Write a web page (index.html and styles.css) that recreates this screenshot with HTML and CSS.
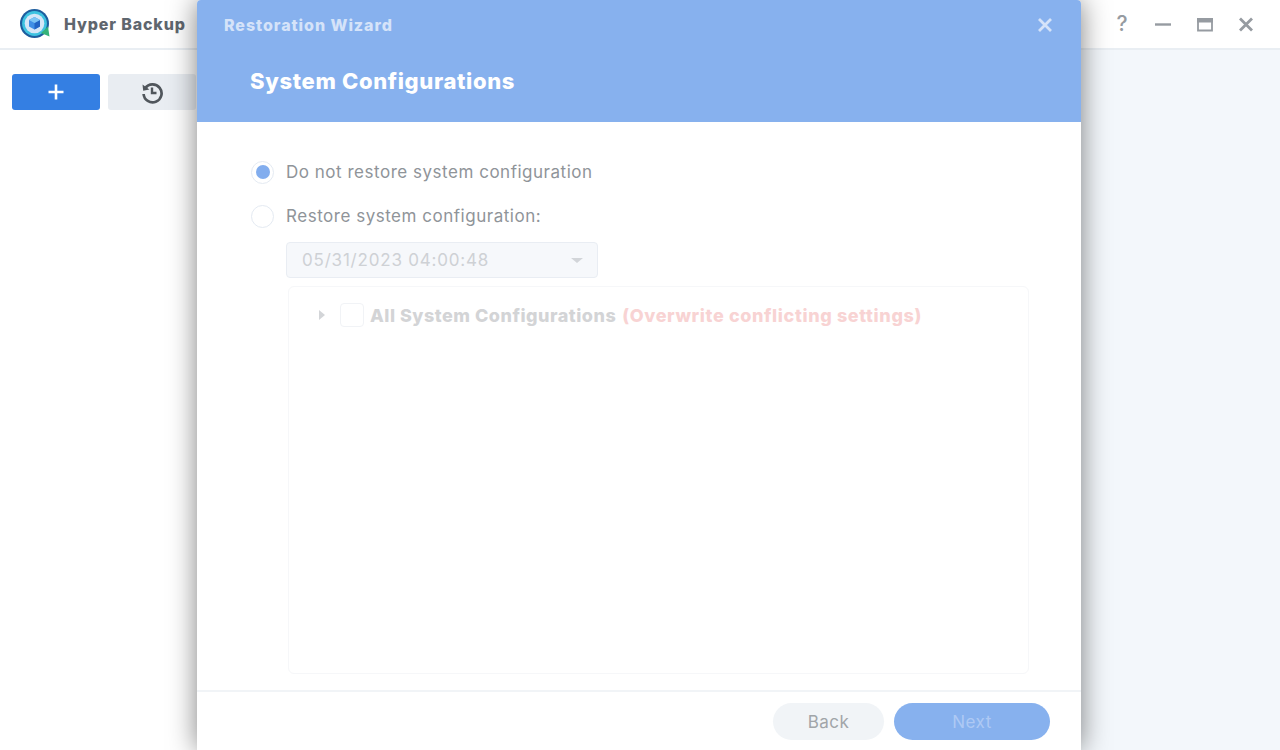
FILE: index.html
```html
<!DOCTYPE html>
<html lang="en">
<head>
<meta charset="utf-8">
<title>Hyper Backup</title>
<link rel="stylesheet" href="styles.css">
</head>
<body>
<div class="app">
  <header class="titlebar">
    <svg class="logo" viewBox="0 0 32 32" width="32" height="32">
      <circle cx="15.5" cy="15.5" r="14.5" fill="#1d5d9e"/>
      <circle cx="15.5" cy="15.5" r="12.400" fill="#3ec2e0"/>
      <circle cx="15.5" cy="15.5" r="9.800" fill="#d5e6f7"/>
      <path d="M15.5 9l5.500 3v6.400l-5.500 3-5.500-3V12z" fill="#3f8fe6"/>
      <path d="M15.5 15l5.500-3v6.400l-5.500 3z" fill="#2264c4"/>
      <path d="M15.5 9l5.500 3-5.500 3-5.500-3z" fill="#7cc4f4"/>
      <path d="M22 25l7-6.500 1.500 10z" fill="#35b27a"/>
    </svg>
    <span class="app-name">Hyper Backup</span>
    <div class="win-controls">
      <span class="help">?</span>
      <svg class="ctl" viewBox="0 0 18 18" width="18" height="18"><path d="M2 9.500h16" stroke="#969ba1" stroke-width="2.400" fill="none"/></svg>
      <svg class="ctl" viewBox="0 0 18 18" width="18" height="18"><path d="M3 4h14v11.500H3z" fill="none" stroke="#969ba1" stroke-width="1.800"/><path d="M2 3h16v4.500H2z" fill="#969ba1"/></svg>
      <svg class="ctl" viewBox="0 0 18 18" width="18" height="18"><path d="M3 3.500l12 12M15 3.500l-12 12" stroke="#969ba1" stroke-width="2.800" fill="none"/></svg>
    </div>
  </header>
  <div class="workspace">
    <aside class="sidebar">
      <button class="tool tool-add" type="button">
        <svg viewBox="0 0 18 18" width="18" height="18"><path d="M9 1.500v15M1.500 9h15" stroke="#fff" stroke-width="2.600" fill="none"/></svg>
      </button>
      <button class="tool tool-history" type="button">
        <svg viewBox="0 0 24 24" width="24" height="24"><path d="M5.200 8.200A9 9 0 1 1 3.600 14" fill="none" stroke="#50565c" stroke-width="2.700"/><path d="M2.500 4.500l.7 6.300 6.200-1.200z" fill="#50565c"/><path d="M12 7.500V13h4.500" fill="none" stroke="#50565c" stroke-width="2.400"/></svg>
      </button>
    </aside>
    <main class="content"></main>
  </div>
</div>

<section class="dialog">
  <div class="dialog-head">
    <div class="dialog-topline">
      <span class="dialog-app">Restoration Wizard</span>
      <svg viewBox="0 0 16 16" width="16" height="16"><path d="M2 2l12 12M14 2L2 14" stroke="#d5e3f9" stroke-width="2.800" fill="none"/></svg>
    </div>
    <h1 class="dialog-title">System Configurations</h1>
  </div>
  <div class="dialog-body">
    <label class="radio-row radio-first"><span class="radio radio-on"></span><span>Do not restore system configuration</span></label>
    <label class="radio-row radio-second"><span class="radio"></span><span>Restore system configuration:</span></label>
    <div class="nested">
      <div class="select"><span>05/31/2023 04:00:48</span><span class="caret"></span></div>
      <div class="tree">
        <div class="tree-row">
          <span class="tree-arrow"></span>
          <span class="check"></span>
          <span class="tree-label">All System Configurations</span>
          <span class="tree-warn">(Overwrite conflicting settings)</span>
        </div>
      </div>
    </div>
  </div>
  <footer class="dialog-foot">
    <button class="pill pill-back" type="button">Back</button>
    <button class="pill pill-next" type="button">Next</button>
  </footer>
</section>
</body>
</html>
```

FILE: styles.css
```css
* { box-sizing: border-box; }
html, body { margin: 0; height: 100%; overflow: hidden; }
body { font-family: Inter, "DejaVu Sans", sans-serif; background: #fff; color: #8f9499; }
.app { height: 750px; display: flex; flex-direction: column; }
.titlebar { height: 50px; flex: none; display: flex; align-items: center; padding-left: 19px; background: #fff; border-bottom: 2px solid #e9eef3; }
.logo { flex: none; }
.app-name { margin-left: 13px; font-size: 16px; font-weight: 800; color: #5f666e; letter-spacing: 0.85px; }
.win-controls { margin-left: auto; display: flex; align-items: center; gap: 24px; padding-right: 25px; }
.help { font-size: 21px; line-height: 24px; color: #969ba1; width: 18px; margin-right: -2px; text-align: center; font-weight: 500; }
.ctl { display: block; }
.workspace { flex: 1; display: flex; }
.sidebar { width: 700px; background: #fff; display: flex; gap: 8px; padding: 24px 0 0 12px; align-items: flex-start; }
.content { flex: 1; background: #f3f7fb; }
.tool { height: 36px; border: 0; border-radius: 3px; padding: 0; display: flex; align-items: center; justify-content: center; }
.tool-add { width: 88px; background: #347fe3; }
.tool-history { width: 88px; background: #e9edf2; }
.dialog { position: absolute; left: 197px; top: 0; width: 884px; height: 750px; display: flex; flex-direction: column; background: #fff; border-radius: 4px 4px 0 0; box-shadow: 0 0 28px rgba(0,0,0,.5); }
.dialog-head { height: 122px; flex: none; background: #87b1ee; color: #fff; padding: 0 28px 0 27px; border-radius: 4px 4px 0 0; }
.dialog-topline { height: 50px; display: flex; align-items: center; justify-content: space-between; }
.dialog-app { font-size: 16px; font-weight: 800; color: #d5e3f9; letter-spacing: 0.95px; }
.dialog-title { margin: 17px 0 0 26px; font-size: 22px; line-height: 28px; font-weight: 800; color: #fff; letter-spacing: 0.65px; }
.dialog-body { flex: 1; padding: 38px 52px 16px 54px; display: flex; flex-direction: column; min-height: 0; }
.radio-row { display: flex; align-items: center; gap: 12px; font-size: 17px; line-height: 24px; color: #8f9499; letter-spacing: 0.52px; }
.radio-second { margin-top: 20px; }
.radio { width: 23px; height: 23px; border-radius: 50%; border: 1px solid #e4eaf2; background: #fff; display: flex; align-items: center; justify-content: center; flex: none; }
.radio-on::after { content: ""; width: 14px; height: 14px; border-radius: 50%; background: #82adee; }
.nested { flex: 1; margin: 14px 0 0 35px; display: flex; flex-direction: column; min-height: 0; }
.select { width: 312px; height: 36px; flex: none; background: #f6f8fb; border: 1px solid #e9edf3; border-radius: 4px; display: flex; align-items: center; justify-content: space-between; padding: 0 14px 0 15px; font-size: 17px; color: #ced1d5; letter-spacing: 0.8px; }
.caret { width: 0; height: 0; border-left: 6px solid transparent; border-right: 6px solid transparent; border-top: 5px solid #d2d5d9; }
.tree { flex: 1; margin: 8px 0 0 2px; width: 741px; border: 1px solid #f6f7f9; border-radius: 6px; padding: 16px 0 0 30px; }
.tree-row { display: flex; align-items: center; height: 24px; font-size: 18px; font-weight: 800; white-space: pre; letter-spacing: 0.5px; }
.tree-arrow { width: 0; height: 0; border-top: 5px solid transparent; border-bottom: 5px solid transparent; border-left: 6px solid #d3d5d8; margin-right: 15px; }
.check { width: 24px; height: 24px; border: 1px solid #f1f3f6; border-radius: 4px; margin-right: 6px; }
.tree-label { color: #d3d4d6; }
.tree-warn { color: #f8d3d3; margin-left: 6px; letter-spacing: 0.63px; }
.dialog-foot { height: 60px; flex: none; border-top: 2px solid #f1f4f7; display: flex; justify-content: flex-end; gap: 10px; padding: 11px 31px 0 0; align-items: flex-start; }
.pill { height: 37px; border: 0; border-radius: 19px; font-family: inherit; font-size: 17px; padding: 0; letter-spacing: 0.5px; }
.pill-back { width: 111px; background: #f1f4f7; color: #a1a5a9; }
.pill-next { width: 156px; background: #87b1ee; color: #aec9f4; }
```
